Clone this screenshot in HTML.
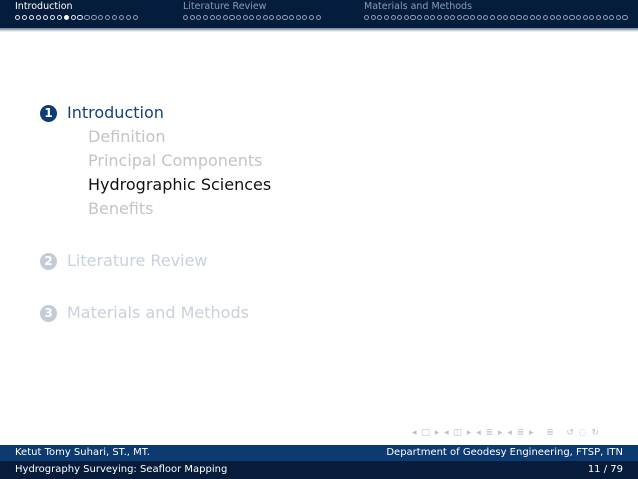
<!DOCTYPE html>
<html><head><meta charset="utf-8"><style>
*{margin:0;padding:0;box-sizing:border-box}
body{width:638px;height:479px;overflow:hidden;background:#fff;font-family:"DejaVu Sans","Liberation Sans",sans-serif;position:relative}
#hdr{position:absolute;left:0;top:0;width:638px;height:28px;background:#051d3c}
#shadow{position:absolute;left:0;top:28px;width:638px;height:4px;background:linear-gradient(#6c7e95,#fff)}
.sec{position:absolute;top:1px;font-size:9.5px;color:#8a9bb3;white-space:nowrap}
.dots{position:absolute;top:15px;display:flex;height:6px}
.d{width:5.2px;height:5.2px;border:0.9px solid #8a9bb3;border-radius:50%;flex:none}
.f{background:#fff;border-color:#fff}
.w{border-color:#dfe6ef}
.t{position:absolute;font-size:16px;white-space:nowrap}
.num{position:absolute;width:17px;height:17px;border-radius:50%;color:#fff;font-size:12px;text-align:center;line-height:17px;font-weight:bold}
#f1{position:absolute;left:0;top:445px;width:638px;height:16px;background:#0d3a70;color:#fff;font-size:10px}
#f2{position:absolute;left:0;top:461px;width:638px;height:18px;background:#061c3a;color:#fff;font-size:10px}
#nav{position:absolute;left:412px;top:428px;font-size:9px;color:#b8c2d0;letter-spacing:1px;white-space:nowrap}
</style></head><body>
<div id="hdr"></div><div id="shadow"></div>
<div class="sec" style="left:15px;color:#fff">Introduction</div>
<div class="sec" style="left:183px">Literature Review</div>
<div class="sec" style="left:364px">Materials and Methods</div>
<div class="dots" style="left:15px;gap:1.75px">
<i class="d w"></i><i class="d w"></i><i class="d w"></i><i class="d w"></i><i class="d w"></i><i class="d w"></i><i class="d w"></i><i class="d f"></i><i class="d w"></i><i class="d w"></i><i class="d"></i><i class="d"></i><i class="d"></i><i class="d"></i><i class="d"></i><i class="d"></i><i class="d"></i><i class="d"></i>
</div>
<div class="dots" style="left:183px;gap:1.45px">
<i class="d"></i><i class="d"></i><i class="d"></i><i class="d"></i><i class="d"></i><i class="d"></i><i class="d"></i><i class="d"></i><i class="d"></i><i class="d"></i><i class="d"></i><i class="d"></i><i class="d"></i><i class="d"></i><i class="d"></i><i class="d"></i><i class="d"></i><i class="d"></i><i class="d"></i><i class="d"></i><i class="d"></i>
</div>
<div class="dots" style="left:364px;gap:1.45px">
<i class="d"></i><i class="d"></i><i class="d"></i><i class="d"></i><i class="d"></i><i class="d"></i><i class="d"></i><i class="d"></i><i class="d"></i><i class="d"></i><i class="d"></i><i class="d"></i><i class="d"></i><i class="d"></i><i class="d"></i><i class="d"></i><i class="d"></i><i class="d"></i><i class="d"></i><i class="d"></i><i class="d"></i><i class="d"></i><i class="d"></i><i class="d"></i><i class="d"></i><i class="d"></i><i class="d"></i><i class="d"></i><i class="d"></i><i class="d"></i><i class="d"></i><i class="d"></i><i class="d"></i><i class="d"></i><i class="d"></i><i class="d"></i><i class="d"></i><i class="d"></i><i class="d"></i><i class="d"></i>
</div>

<div class="num" style="left:40px;top:105px;background:#0f3c74">1</div>
<div class="t" style="left:67px;top:103px;color:#15427a">Introduction</div>
<div class="t" style="left:88px;top:127px;color:#c4c4c4">Definition</div>
<div class="t" style="left:88px;top:151px;color:#c4c4c4">Principal Components</div>
<div class="t" style="left:88px;top:175px;color:#111">Hydrographic Sciences</div>
<div class="t" style="left:88px;top:199px;color:#c4c4c4">Benefits</div>
<div class="num" style="left:40px;top:253px;background:#c2ccd8">2</div>
<div class="t" style="left:67px;top:251px;color:#c8d1dc">Literature Review</div>
<div class="num" style="left:40px;top:305px;background:#c2ccd8">3</div>
<div class="t" style="left:67px;top:303px;color:#c8d1dc">Materials and Methods</div>

<div id="nav">◂ □ ▸ ◂ ◫ ▸ ◂ ≣ ▸ ◂ ≣ ▸ &nbsp; ≣ &nbsp; ↺ ◌ ↻</div>

<div id="f1"><span style="position:absolute;left:15px;top:2px">Ketut Tomy Suhari, ST., MT.</span><span style="position:absolute;right:15px;top:2px">Department of Geodesy Engineering, FTSP, ITN</span></div>
<div id="f2"><span style="position:absolute;left:15px;top:3px">Hydrography Surveying: Seafloor Mapping</span><span style="position:absolute;right:15px;top:3px">11 / 79</span></div>
</body></html>
